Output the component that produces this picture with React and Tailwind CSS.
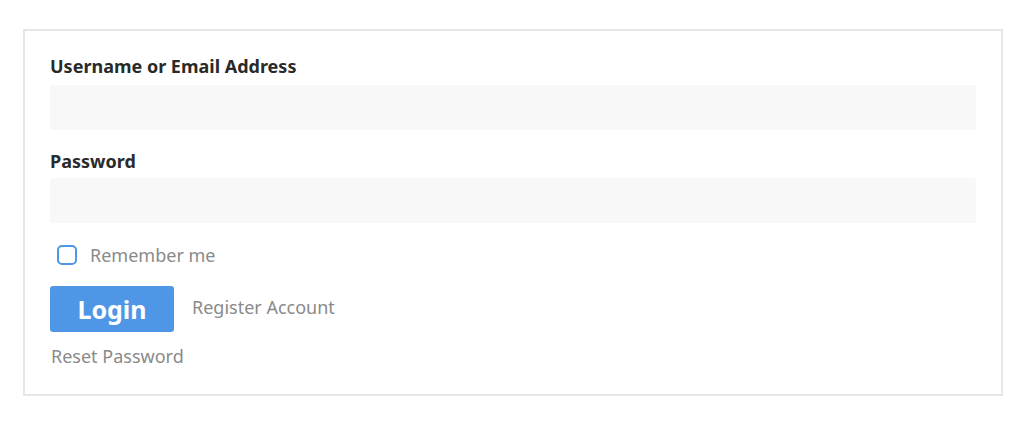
import React from "react";

const App = () => {
    return (
        <div className="bg-white w-[1024px] h-[423px] pt-[29px] pl-[23px]" style={{ fontFamily: '"Noto Sans", "Open Sans", sans-serif' }}>
            <form className="w-[980px] h-[367px] border-2 border-[#e6e6e6] px-[25px] pt-[23px]">
                <label className="block text-[18px] font-bold text-[#2a2a2a] leading-[24px]">Username or Email Address</label>
                <input type="text" className="block w-full h-[45px] mt-[7px] bg-[#f8f8f8] rounded-[2px] outline-none" />

                <label className="block text-[18px] font-bold text-[#2a2a2a] leading-[24px] mt-[19px]">Password</label>
                <input type="password" className="block w-full h-[45px] mt-[5px] bg-[#f8f8f8] rounded-[2px] outline-none" />

                <label className="flex items-center mt-[20px] ml-[7px] gap-[13px] h-[24px]">
                    <span className="w-[20px] h-[20px] border-[2.5px] border-[#4f97e6] rounded-[5px] bg-white"></span>
                    <span className="text-[18px] text-[#8a8a8a] leading-[24px]">Remember me</span>
                </label>

                <div className="flex items-center mt-[19px] gap-[18px]">
                    <button type="button" className="w-[124px] h-[46px] bg-[#4f97e6] rounded-[3px] text-white font-bold text-[25px] leading-none">Login</button>
                    <span className="text-[18px] text-[#8a8a8a] mb-[4px]">Register Account</span>
                </div>
                <div className="text-[18px] text-[#8a8a8a] leading-[24px] mt-[12px] ml-[1px]">Reset Password</div>
            </form>
        </div>
    );
};

export default App;
